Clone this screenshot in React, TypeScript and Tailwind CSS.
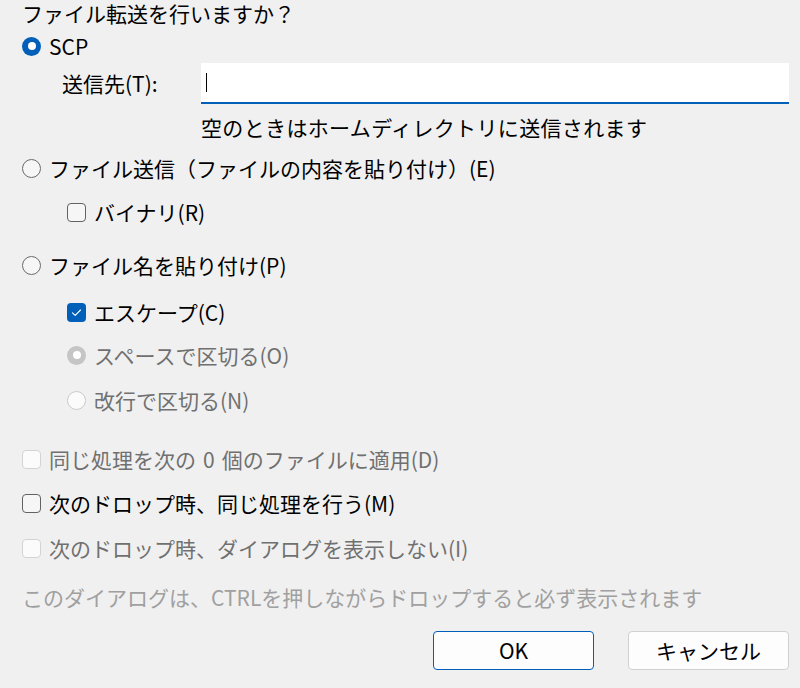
import type { ReactNode } from 'react';

const font = "font-['Noto_Sans_CJK_JP','Noto_Sans',sans-serif]";

type Tone = 'normal' | 'disabled';

function Radio({ checked = false, tone = 'normal' }: { checked?: boolean; tone?: Tone }) {
    if (checked) {
        return (
            <span
                className={
                    'flex h-[19px] w-[19px] shrink-0 items-center justify-center rounded-full ' +
                    (tone === 'disabled' ? 'bg-[#c5c5c5]' : 'bg-[#005fb8]')
                }
            >
                <span className="h-[8px] w-[8px] rounded-full bg-white" />
            </span>
        );
    }
    return (
        <span
            className={
                'h-[19px] w-[19px] shrink-0 rounded-full border ' +
                (tone === 'disabled' ? 'border-[#cbcbcb] bg-[#fbfbfb]' : 'border-[#6a6a6a] bg-[#f6f6f6]')
            }
        />
    );
}

function Checkbox({ checked = false, tone = 'normal' }: { checked?: boolean; tone?: Tone }) {
    if (checked) {
        return (
            <span className="flex h-[19px] w-[19px] shrink-0 items-center justify-center rounded-[4px] bg-[#005fb8]">
                <svg width="19" height="19" viewBox="0 0 19 19" fill="none">
                    <path d="M5.5 9.8 L8.2 12.4 L13.5 7" stroke="white" strokeWidth="1.1" strokeLinecap="round" strokeLinejoin="round" />
                </svg>
            </span>
        );
    }
    return (
        <span
            className={
                'h-[19px] w-[19px] shrink-0 rounded-[4px] border ' +
                (tone === 'disabled' ? 'border-[#d3d3d3] bg-[#fbfbfb]' : 'border-[#626262] bg-[#f6f6f6]')
            }
        />
    );
}

function Option({
    control,
    tone = 'normal',
    className = '',
    children,
}: {
    control: ReactNode;
    tone?: Tone;
    className?: string;
    children: ReactNode;
}) {
    return (
        <div className={'flex h-[32px] items-center gap-[8px] ' + className}>
            {control}
            <span className={tone === 'disabled' ? 'text-[#707070]' : 'text-black'}>{children}</span>
        </div>
    );
}

export default function App() {
    return (
        <div className={`${font} flex h-[688px] w-[800px] flex-col overflow-hidden bg-[#f0f0f0] pl-[22px] pr-[11px] text-[21px] leading-none`}>
            {/* Header */}
            <div className="flex h-[28px] items-center leading-normal">ファイル転送を行いますか？</div>

            {/* SCP */}
            <Option className="mt-[2px]" control={<Radio checked />}>
                SCP
            </Option>
            <div className="mt-[1px] flex h-[41px] items-center">
                <span className="w-[179px] pl-[40px]">送信先(T):</span>
                <div className="flex h-[41px] flex-1 items-center border-b-2 border-[#005fb8] bg-white pl-[5px]">
                    <span className="h-[19px] w-px bg-black" />
                </div>
            </div>
            <div className="mt-[8px] flex h-[30px] items-center pl-[179px] tracking-[0.35px]">
                空のときはホームディレクトリに送信されます
            </div>

            {/* Paste file content */}
            <Option className="mt-[10px]" control={<Radio />}>
                ファイル送信（ファイルの内容を貼り付け）(E)
            </Option>
            <Option className="ml-[45px] mt-[12px]" control={<Checkbox />}>
                バイナリ(R)
            </Option>

            {/* Paste file name */}
            <Option className="mt-[21px]" control={<Radio />}>
                ファイル名を貼り付け(P)
            </Option>
            <Option className="ml-[45px] mt-[15px]" control={<Checkbox checked />}>
                エスケープ(C)
            </Option>
            <Option className="ml-[45px] mt-[11px]" tone="disabled" control={<Radio checked tone="disabled" />}>
                スペースで区切る(O)
            </Option>
            <Option className="ml-[45px] mt-[13px]" tone="disabled" control={<Radio tone="disabled" />}>
                改行で区切る(N)
            </Option>

            {/* Drop behaviour */}
            <Option className="mt-[27px]" tone="disabled" control={<Checkbox tone="disabled" />}>
                同じ処理を次の<span className="mx-[7px]">0</span>個のファイルに適用(D)
            </Option>
            <Option className="mt-[12px]" control={<Checkbox />}>
                次のドロップ時、同じ処理を行う(M)
            </Option>
            <Option className="mt-[13px]" tone="disabled" control={<Checkbox tone="disabled" />}>
                次のドロップ時、ダイアログを表示しない(I)
            </Option>

            <div className="mt-[17px] flex h-[32px] items-center text-[#a0a0a0]">
                このダイアログは、CTRLを押しながらドロップすると必ず表示されます
            </div>

            {/* Buttons */}
            <div className="mt-[18px] flex justify-end gap-[34px]">
                <button className="h-[39px] w-[161px] rounded-[4px] border border-[#005fb8] bg-[#fdfdfd] text-black">
                    OK
                </button>
                <button className="h-[39px] w-[161px] rounded-[4px] border border-[#d0d0d0] bg-[#fdfdfd] text-black">
                    キャンセル
                </button>
            </div>
        </div>
    );
}
